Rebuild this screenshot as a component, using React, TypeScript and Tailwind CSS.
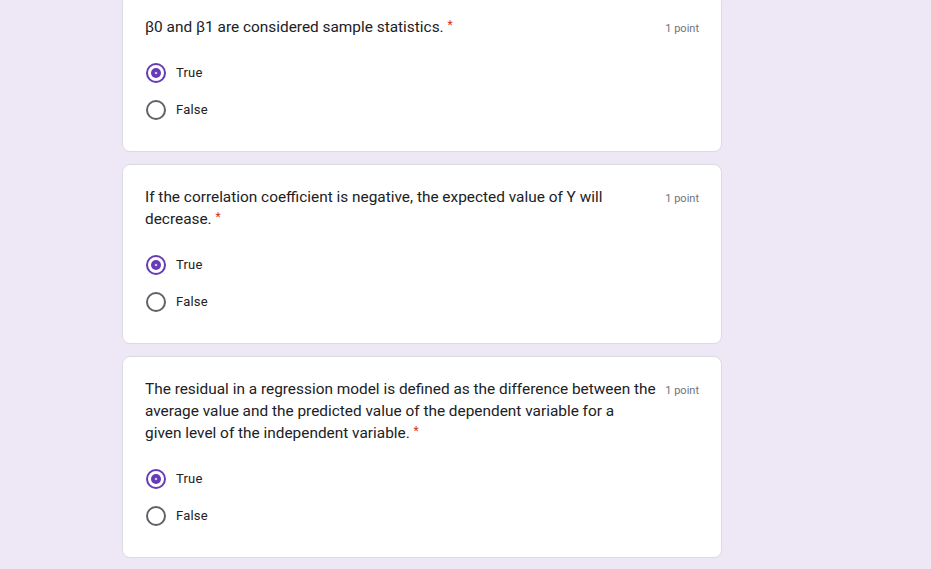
import type { ReactNode } from "react";

const questions: { title: ReactNode; answer: string }[] = [
  {
    title: "β0 and β1 are considered sample statistics.",
    answer: "True",
  },
  {
    title: "If the correlation coefficient is negative, the expected value of Y will decrease.",
    answer: "True",
  },
  {
    title: (
      <>
        The residual in a regression model is defined as the difference between the average value and the predicted
        value of the dependent variable for a<br />
        given level of the independent variable.
      </>
    ),
    answer: "True",
  },
];

function Radio({ checked }: { checked: boolean }) {
  return (
    <svg width="20" height="20" viewBox="0 0 20 20" className="shrink-0">
      <circle cx="10" cy="10" r="9" fill="none" stroke={checked ? "#673ab7" : "#5f6368"} strokeWidth="2" />
      {checked && <circle cx="10" cy="10" r="5" fill="#673ab7" />}
      {checked && <circle cx="10" cy="10" r="1.3" fill="#ffffff" opacity="0.7" />}
    </svg>
  );
}

export default function App() {
  return (
    <div className="h-[569px] overflow-hidden bg-[#ede7f6] font-['Roboto',sans-serif]">
      <div className="ml-[122px] w-[600px] -mt-[6px] flex flex-col gap-3">
        {questions.map((q, i) => (
          <div key={i} className="bg-white border border-[#dadce0] rounded-lg px-[22px] pt-[21px] pb-[23px]">
            <div className="flex items-start gap-[6px]">
              <div className="flex-1 text-[15.4px] leading-[22px] text-[#202124]">
                {q.title} <span className="text-[#d93025] text-[12px] align-top leading-[18px]">*</span>
              </div>
              <div className="text-[11px] leading-[19px] text-[#70757a] pt-[3px] whitespace-nowrap">1 point</div>
            </div>
            <div className="mt-4 flex flex-col">
              {["True", "False"].map((opt) => (
                <div key={opt} className="h-[37px] flex items-center gap-[10px] pl-[1px]">
                  <Radio checked={opt === q.answer} />
                  <span className="text-[13px] text-[#202124] tracking-[0.2px]">{opt}</span>
                </div>
              ))}
            </div>
          </div>
        ))}
      </div>
    </div>
  );
}
